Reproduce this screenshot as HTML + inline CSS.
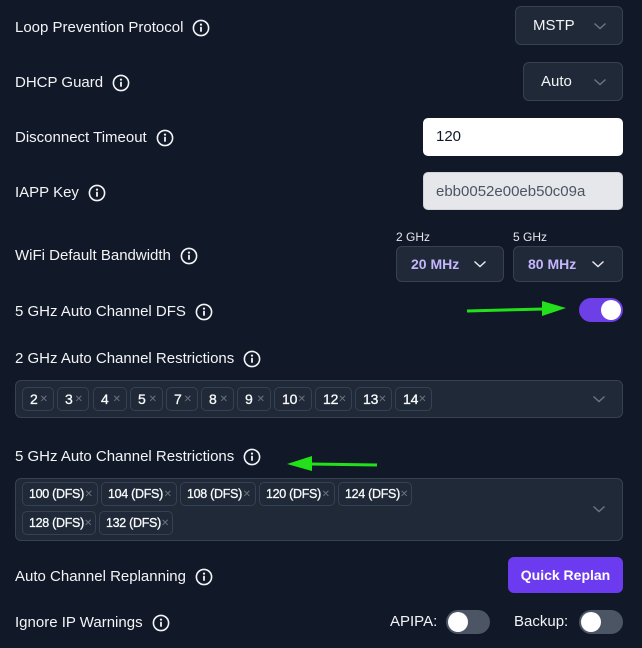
<!DOCTYPE html>
<html><head><meta charset="utf-8"><style>
*{box-sizing:border-box;margin:0;padding:0}
body{width:642px;height:648px;background:#111827;font-family:"Liberation Sans",sans-serif;color:#f3f4f6;position:relative;overflow:hidden}
.a{position:absolute}
.lbl{position:absolute;left:15px;font-size:15px;line-height:18px;white-space:nowrap;display:flex;align-items:center;margin-top:1px}
.lbl svg{margin-left:9px}
.sel{position:absolute;background:#1f2937;border:1px solid #374151;border-radius:6px;font-size:15px;color:#f3f4f6;display:flex;align-items:center}
.chev{position:absolute}
.box{position:absolute;left:15px;width:608px;background:#1f2937;border:1px solid #374151;border-radius:6px}
.chip{position:absolute;height:24px;border:1px solid #374151;border-radius:5px;background:#1f2937;font-size:14px;color:#f9fafb;display:flex;align-items:center;justify-content:space-between;padding:0 5px 0 7px;white-space:nowrap;letter-spacing:-0.2px;-webkit-text-stroke:0.3px #f9fafb;overflow:hidden}
.chip.d{font-size:12.5px;letter-spacing:-0.3px;padding:0 4px 0 6px}
.chip span.x{color:#6b7280;font-size:10px;-webkit-text-stroke:0;letter-spacing:0}
.tog{position:absolute;width:44px;height:24px;border-radius:12px}
.tog i{position:absolute;top:2px;width:20px;height:20px;border-radius:10px;background:#fff}
</style></head><body>
<svg width="0" height="0" style="position:absolute"><defs>
<symbol id="info" viewBox="0 0 18 18"><circle cx="9" cy="9" r="7.6" fill="none" stroke="#f3f4f6" stroke-width="1.6"/><circle cx="9" cy="5.6" r="1.1" fill="#f3f4f6"/><rect x="8.1" y="7.8" width="1.8" height="5" rx=".6" fill="#f3f4f6"/></symbol>
<symbol id="chv" viewBox="0 0 14 8"><path d="M1.5 1.5L7 6.5L12.5 1.5" fill="none" stroke="currentColor" stroke-width="1.5"/></symbol>
</defs></svg>

<div class="lbl" style="top:18px">Loop Prevention Protocol<svg width="18" height="18"><use href="#info"/></svg></div>
<div class="sel" style="left:515px;top:6px;width:108px;height:39px;padding-left:17px">MSTP</div>
<svg class="chev" style="left:593px;top:22px;color:#6b7280" width="14" height="8"><use href="#chv"/></svg>

<div class="lbl" style="top:73px">DHCP Guard<svg width="18" height="18"><use href="#info"/></svg></div>
<div class="sel" style="left:523px;top:62px;width:100px;height:39px;padding-left:17px">Auto</div>
<svg class="chev" style="left:593px;top:78px;color:#6b7280" width="14" height="8"><use href="#chv"/></svg>

<div class="lbl" style="top:128px">Disconnect Timeout<svg width="18" height="18"><use href="#info"/></svg></div>
<div class="a" style="left:423px;top:118px;width:200px;height:38px;background:#fff;border-radius:5px;color:#111827;font-size:15px;padding:10px 0 0 13px">120</div>

<div class="lbl" style="top:183px">IAPP Key<svg width="18" height="18"><use href="#info"/></svg></div>
<div class="a" style="left:423px;top:172px;width:200px;height:38px;background:#e5e7eb;border:1px solid #d1d5db;border-radius:5px;color:#4b5563;font-size:15px;padding:10px 0 0 12px;overflow:hidden;white-space:nowrap">ebb0052e00eb50c09a</div>

<div class="lbl" style="top:246px">WiFi Default Bandwidth<svg width="18" height="18"><use href="#info"/></svg></div>
<div class="a" style="left:396px;top:230px;font-size:12px;color:#e5e7eb">2 GHz</div>
<div class="a" style="left:513px;top:230px;font-size:12px;color:#e5e7eb">5 GHz</div>
<div class="sel" style="left:396px;top:246px;width:108px;height:36px;padding-left:14px;color:#c4b5fd;font-weight:bold;font-size:14px">20 MHz</div>
<svg class="chev" style="left:473px;top:260px;color:#e5e7eb" width="14" height="8"><use href="#chv"/></svg>
<div class="sel" style="left:513px;top:246px;width:110px;height:36px;padding-left:14px;color:#c4b5fd;font-weight:bold;font-size:14px">80 MHz</div>
<svg class="chev" style="left:591px;top:260px;color:#e5e7eb" width="14" height="8"><use href="#chv"/></svg>

<div class="lbl" style="top:302px">5 GHz Auto Channel DFS<svg width="18" height="18"><use href="#info"/></svg></div>
<div class="tog" style="left:579px;top:298px;background:#6d3fe6"><i style="left:22px"></i></div>
<svg class="a" style="left:460px;top:295px" width="115" height="30"><path d="M7 16L84 14" stroke="#22e01a" stroke-width="3"/><path d="M82 6L106 13L82 21Z" fill="#22e01a"/></svg>

<div class="lbl" style="top:349px">2 GHz Auto Channel Restrictions<svg width="18" height="18"><use href="#info"/></svg></div>
<div class="box" style="top:380px;height:38px"></div>
<div class="chip" style="left:22px;top:387px;width:32px">2<span class="x">✕</span></div>
<div class="chip" style="left:57px;top:387px;width:32px">3<span class="x">✕</span></div>
<div class="chip" style="left:93px;top:387px;width:34px">4<span class="x">✕</span></div>
<div class="chip" style="left:130px;top:387px;width:33px">5<span class="x">✕</span></div>
<div class="chip" style="left:166px;top:387px;width:32px">7<span class="x">✕</span></div>
<div class="chip" style="left:201px;top:387px;width:33px">8<span class="x">✕</span></div>
<div class="chip" style="left:237px;top:387px;width:34px">9<span class="x">✕</span></div>
<div class="chip" style="left:274px;top:387px;width:38px">10<span class="x">✕</span></div>
<div class="chip" style="left:315px;top:387px;width:37px">12<span class="x">✕</span></div>
<div class="chip" style="left:355px;top:387px;width:37px">13<span class="x">✕</span></div>
<div class="chip" style="left:395px;top:387px;width:37px">14<span class="x">✕</span></div>
<svg class="chev" style="left:592px;top:395px;color:#6b7280" width="14" height="8"><use href="#chv"/></svg>

<div class="lbl" style="top:447px">5 GHz Auto Channel Restrictions<svg width="18" height="18"><use href="#info"/></svg></div>
<svg class="a" style="left:280px;top:452px" width="105" height="25"><path d="M97 13L30 12" stroke="#22e01a" stroke-width="3"/><path d="M32 4L7 12L32 19Z" fill="#22e01a"/></svg>
<div class="box" style="top:478px;height:63px"></div>
<div class="chip d" style="left:22px;top:482px;width:76px">100 (DFS)<span class="x">✕</span></div>
<div class="chip d" style="left:101px;top:482px;width:76px">104 (DFS)<span class="x">✕</span></div>
<div class="chip d" style="left:180px;top:482px;width:76px">108 (DFS)<span class="x">✕</span></div>
<div class="chip d" style="left:259px;top:482px;width:76px">120 (DFS)<span class="x">✕</span></div>
<div class="chip d" style="left:338px;top:482px;width:74px">124 (DFS)<span class="x">✕</span></div>
<div class="chip d" style="left:22px;top:511px;width:74px">128 (DFS)<span class="x">✕</span></div>
<div class="chip d" style="left:99px;top:511px;width:74px">132 (DFS)<span class="x">✕</span></div>
<svg class="chev" style="left:592px;top:505px;color:#6b7280" width="14" height="8"><use href="#chv"/></svg>

<div class="lbl" style="top:567px">Auto Channel Replanning<svg width="18" height="18"><use href="#info"/></svg></div>
<div class="a" style="left:508px;top:557px;width:115px;height:36px;background:#6d3bef;border-radius:6px;color:#fff;font-weight:bold;font-size:14px;text-align:center;line-height:36px">Quick Replan</div>

<div class="lbl" style="top:613px">Ignore IP Warnings<svg width="18" height="18"><use href="#info"/></svg></div>
<div class="a" style="left:390px;top:613px;font-size:15px">APIPA:</div>
<div class="tog" style="left:446px;top:610px;background:#4b5563"><i style="left:2px"></i></div>
<div class="a" style="left:514px;top:613px;font-size:15px">Backup:</div>
<div class="tog" style="left:579px;top:610px;background:#4b5563"><i style="left:2px"></i></div>
</body></html>
